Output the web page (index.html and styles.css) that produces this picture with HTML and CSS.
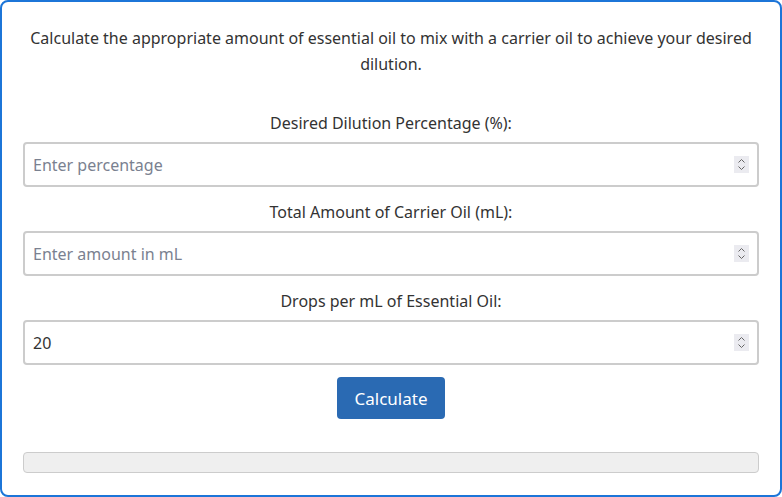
FILE: index.html
```html
<!DOCTYPE html>
<html lang="en">

<head>
    <meta charset="UTF-8">
    <meta name="viewport" content="width=device-width, initial-scale=1.0">
    <title>Essential Oil Dilution Calculator</title>
    <link rel="stylesheet" href="styles.css">
</head>

<body>
    <div class="calc-card">
        <p class="intro">Calculate the appropriate amount of essential oil to mix with a carrier oil to achieve your desired dilution.</p>

        <label for="dilution">Desired Dilution Percentage (%):</label>
        <div class="field">
            <input type="number" id="dilution" placeholder="Enter percentage">
            <span class="spin"><svg width="9" height="13" viewBox="0 0 9 13"><path d="M1.5 4.5 L4.5 1.5 L7.5 4.5 M1.5 8.5 L4.5 11.5 L7.5 8.5" fill="none" stroke="#666" stroke-width="1"/></svg></span>
        </div>

        <label for="carrier">Total Amount of Carrier Oil (mL):</label>
        <div class="field">
            <input type="number" id="carrier" placeholder="Enter amount in mL">
            <span class="spin"><svg width="9" height="13" viewBox="0 0 9 13"><path d="M1.5 4.5 L4.5 1.5 L7.5 4.5 M1.5 8.5 L4.5 11.5 L7.5 8.5" fill="none" stroke="#666" stroke-width="1"/></svg></span>
        </div>

        <label for="drops">Drops per mL of Essential Oil:</label>
        <div class="field">
            <input type="number" id="drops" value="20">
            <span class="spin"><svg width="9" height="13" viewBox="0 0 9 13"><path d="M1.5 4.5 L4.5 1.5 L7.5 4.5 M1.5 8.5 L4.5 11.5 L7.5 8.5" fill="none" stroke="#666" stroke-width="1"/></svg></span>
        </div>

        <button id="calc-button" onclick="calculate()">Calculate</button>

        <div id="result"></div>
    </div>
    <script>
        function calculate() {
            const pct = parseFloat(document.getElementById('dilution').value);
            const ml = parseFloat(document.getElementById('carrier').value);
            const drops = parseFloat(document.getElementById('drops').value);
            const result = document.getElementById('result');

            if (isNaN(pct) || isNaN(ml) || isNaN(drops)) {
                result.textContent = 'Please fill in all fields.';
                return;
            }

            const oilMl = ml * pct / 100;
            result.textContent = `Use ${oilMl.toFixed(2)} mL (${Math.round(oilMl * drops)} drops) of essential oil.`;
        }
    </script>
</body>

</html>
```

FILE: styles.css
```css
body {
    margin: 0;
    font-family: 'Noto Sans', 'Open Sans', sans-serif;
    color: #333;
    background: #fff;
}

.calc-card {
    box-sizing: border-box;
    width: 782px;
    height: 497px;
    border: 2px solid #1c75d8;
    border-radius: 8px;
    padding: 23px 21px 0;
    display: flex;
    flex-direction: column;
    align-items: stretch;
}

.intro {
    margin: 0 0 35px;
    text-align: center;
    font-size: 16px;
    line-height: 26px;
}

label {
    display: block;
    text-align: center;
    font-size: 16px;
    line-height: 22px;
    margin-bottom: 8px;
}

.field {
    display: flex;
    align-items: center;
    height: 45px;
    box-sizing: border-box;
    border: 2px solid #ccc;
    border-radius: 4px;
    margin-bottom: 14px;
    padding: 0 8px 0 8px;
}

.field input {
    flex: 1;
    border: none;
    outline: none;
    font: inherit;
    font-size: 16px;
    color: #333;
    padding: 0;
    background: transparent;
    -moz-appearance: textfield;
}

.field input::-webkit-inner-spin-button,
.field input::-webkit-outer-spin-button {
    -webkit-appearance: none;
    margin: 0;
}

.field input::placeholder {
    color: #7a8190;
}

.spin {
    width: 15px;
    height: 17px;
    background: #ebebf0;
    display: flex;
    align-items: center;
    justify-content: center;
}

#calc-button {
    align-self: center;
    background-color: #2a6ab3;
    color: white;
    border: none;
    border-radius: 4px;
    font: inherit;
    font-size: 17px;
    width: 108px;
    height: 42px;
    margin-top: -2px;
    cursor: pointer;
}

#result {
    margin-top: 33px;
    height: 21px;
    box-sizing: border-box;
    background: #efefef;
    border: 1px solid #ccc;
    border-radius: 4px;
    text-align: center;
    font-size: 14px;
}
```
